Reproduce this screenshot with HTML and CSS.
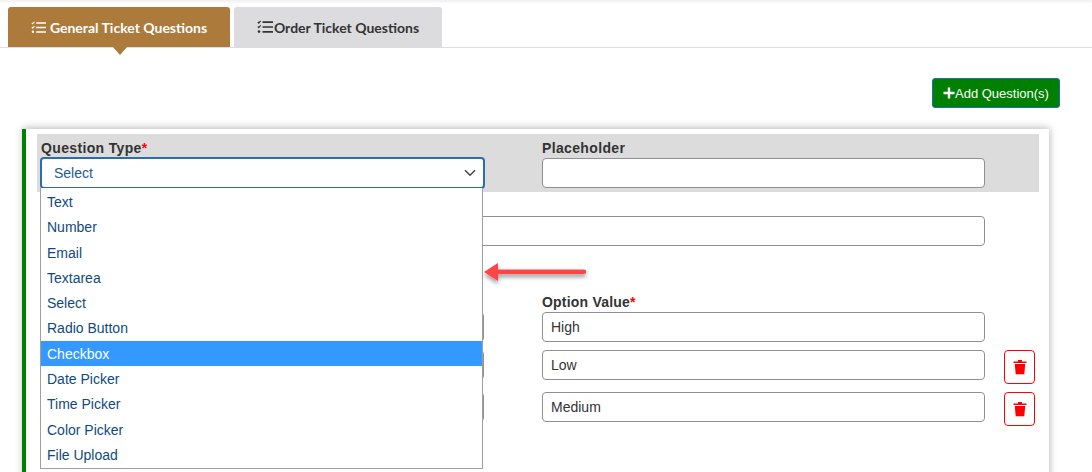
FILE: index.html
```html
<!DOCTYPE html>
<html lang="en">
<head>
<meta charset="utf-8">
<title>Ticket Questions</title>
<link rel="stylesheet" href="styles.css">
</head>
<body>
<div class="topbar"></div>
<nav class="tabs">
  <a class="tab tab-active">
    <svg class="tab-icon" viewBox="0 0 16 14" width="15" height="13"><path d="M0.8 2 L1.8 3 L3.6 0.8 M0.8 6.6 L1.8 7.6 L3.6 5.4" fill="none" stroke="currentColor" stroke-width="1.2"/><circle cx="2" cy="11.6" r="1.3" fill="currentColor"/><path d="M5.5 2.2H16M5.5 7H16M5.5 11.8H16" stroke="currentColor" stroke-width="1.7"/></svg>
    General Ticket Questions
  </a>
  <a class="tab tab-idle">
    <svg class="tab-icon" viewBox="0 0 16 14" width="16" height="14"><path d="M0.8 2 L1.8 3 L3.6 0.8 M0.8 6.6 L1.8 7.6 L3.6 5.4" fill="none" stroke="currentColor" stroke-width="1.2"/><circle cx="2" cy="11.6" r="1.3" fill="currentColor"/><path d="M5.5 2.2H16M5.5 7H16M5.5 11.8H16" stroke="currentColor" stroke-width="1.7"/></svg>
    Order Ticket Questions
  </a>
</nav>
<div class="toolbar">
  <button class="add-btn"><svg viewBox="0 0 12 12" width="12" height="12"><path d="M6 0.5V11.5M0.5 6H11.5" stroke="#fff" stroke-width="2.4"/></svg>Add Question(s)</button>
</div>
<section class="card">
  <div class="row-head">
    <div class="field">
      <label class="lbl">Question Type<span class="req">*</span></label>
      <div class="select-wrap">
        <div class="select">Select
          <svg class="chev" viewBox="0 0 12 8" width="12" height="8"><path d="M1 1.2L6 6.2L11 1.2" fill="none" stroke="#444" stroke-width="1.5"/></svg>
        </div>
        <ul class="menu">
          <li>Text</li><li>Number</li><li>Email</li><li>Textarea</li><li>Select</li><li>Radio Button</li>
          <li class="hl">Checkbox</li>
          <li>Date Picker</li><li>Time Picker</li><li>Color Picker</li><li>File Upload</li>
        </ul>
      </div>
    </div>
    <div class="field">
      <label class="lbl">Placeholder</label>
      <div class="input"></div>
    </div>
  </div>
  <div class="row-label">
    <div class="input"></div>
  </div>
  <svg class="arrow" viewBox="0 0 112 32" width="112" height="32">
    <defs><filter id="sh" x="-20%" y="-50%" width="140%" height="220%"><feDropShadow dx="0" dy="3" stdDeviation="2" flood-color="#000" flood-opacity=".4"/></filter></defs>
    <path d="M3 12L17 3V9.5H103a2.2 2.2 0 0 1 0 4.5H17V21Z" fill="#ff4545" filter="url(#sh)"/>
  </svg>
  <div class="options">
    <div class="opt-row opt-first">
      <div class="input"></div>
      <div class="field">
        <label class="lbl lbl-plain">Option Value<span class="req">*</span></label>
        <div class="input val">High</div>
      </div>
    </div>
    <div class="opt-row">
      <div class="input"></div>
      <div class="input val">Low</div>
      <button class="del"><svg viewBox="0 0 14 16" width="14" height="16"><path d="M0.5 2.5H13.5V4H0.5ZM5 1H9V2.5H5ZM1.8 5H12.2L11.3 15.2H2.7Z" fill="#f00"/></svg></button>
    </div>
    <div class="opt-row">
      <div class="input"></div>
      <div class="input val">Medium</div>
      <button class="del"><svg viewBox="0 0 14 16" width="14" height="16"><path d="M0.5 2.5H13.5V4H0.5ZM5 1H9V2.5H5ZM1.8 5H12.2L11.3 15.2H2.7Z" fill="#f00"/></svg></button>
    </div>
  </div>
</section>
</body>
</html>
```
FILE: styles.css
```css
* { box-sizing: border-box; }
html, body { margin: 0; height: 472px; overflow: hidden; background: #fff; }
body { font-family: "Liberation Sans", Arial, sans-serif; font-size: 14px; color: #333; }

.topbar { height: 3px; background: linear-gradient(#f0f0f0, #fbfbfb); }

.tabs { display: flex; gap: 4px; height: 45px; padding: 4px 0 0 8px; border-bottom: 1px solid #ddd; }
.tab { position: relative; display: flex; align-items: center; justify-content: center; height: 40px; font-family: Lato, sans-serif; font-weight: 700; font-size: 14px; border-radius: 3px 3px 0 0; }
.tab-active { gap: 4px; width: 222px; background: #ac7a3b; color: #fff; }
.tab-active::after { content: ""; position: absolute; left: 105px; top: 40px; border: 7px solid transparent; border-bottom: 0; border-top: 8px solid #ac7a3b; }
.tab-idle { gap: 1px; width: 208px; background: #dcdcdf; color: #333; }
.tab-icon { flex: none; }

.toolbar { display: flex; justify-content: flex-end; padding: 30px 32px 0 0; }
.add-btn { display: flex; align-items: center; height: 30px; width: 128px; padding: 0 0 0 10px; background: #008000; color: #fff; border: 1px solid #1f6fa8; border-radius: 3px; font-family: "Liberation Sans", Arial, sans-serif; font-size: 13px; }

.card { position: relative; width: 1027px; height: 360px; margin: 21px 0 0 22px; padding-top: 5px; background: #fff; border-left: 4px solid #008000; box-shadow: 0 -2px 8px rgba(0,0,0,.18), 2px 0 6px rgba(0,0,0,.1); }

.row-head { display: grid; grid-template-columns: 443px 443px; column-gap: 58px; width: 1002px; height: 58px; margin-left: 11px; padding: 6px 4px 0; background: #dcdcdc; }
.lbl { display: block; height: 18px; font-weight: 700; font-size: 14px; letter-spacing: .35px; line-height: 17px; color: #333; }
.lbl-plain { letter-spacing: .2px; }
.req { color: #f00; }

.input { height: 30px; background: #fff; border: 1px solid #8f8f94; border-radius: 4px; }
.val { padding-left: 8px; line-height: 29px; color: #333; }

.select-wrap { position: relative; }
.select { position: relative; width: 445px; height: 32px; margin: -1px 0 0 -1px; padding-left: 12px; line-height: 28px; color: #1d5a91; background: #fff; border: 2px solid #2a6ead; border-radius: 4px; }
.chev { position: absolute; right: 7px; top: 10px; }
.menu { position: absolute; z-index: 3; left: -1px; top: 31px; width: 443px; height: 281px; margin: 0; padding: 1px 0 0; list-style: none; background: #fff; border: 1px solid #a0a0a0; border-top: 0; }
.menu li { height: 25.3px; padding-left: 6px; line-height: 27px; color: #0f4a80; }
.menu li.hl { background: #3399ff; color: #fff; }

.row-label { margin: 24px 0 0 11px; padding-left: 4px; }
.row-label .input { width: 944px; }

.arrow { position: absolute; z-index: 4; left: 455px; top: 131px; }

.options { margin: 48px 0 0 15px; }
.opt-row { display: grid; grid-template-columns: 443px 443px 31px; column-gap: 58px; margin-top: 8px; }
.opt-first { margin-top: 0; height: 48px; align-items: end; }
.opt-row .del { margin-left: -39px; }
.del { display: flex; align-items: center; justify-content: center; width: 31px; height: 34px; padding: 0; background: #fff; border: 1px solid #f00; border-radius: 4px; }
```
